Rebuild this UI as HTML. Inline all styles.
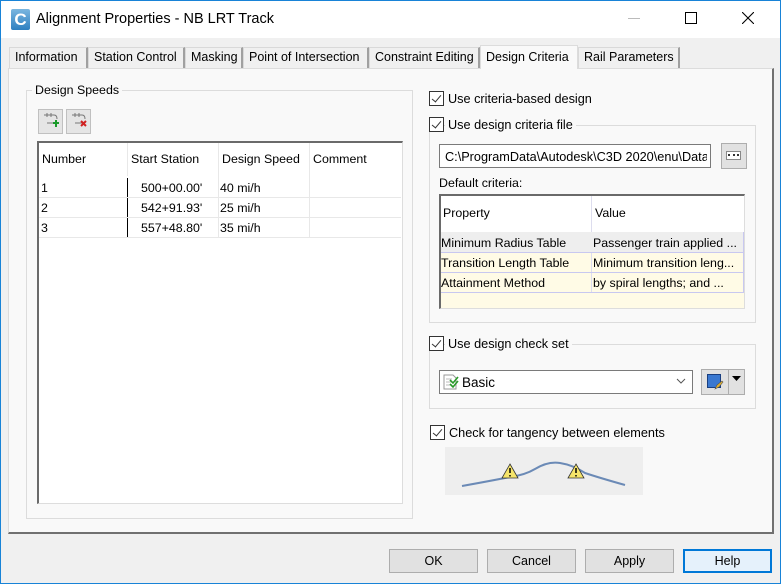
<!DOCTYPE html>
<html><head><meta charset="utf-8">
<style>
*{box-sizing:border-box;margin:0;padding:0}
body{width:781px;height:584px;overflow:hidden;font-family:"Liberation Sans",sans-serif;font-size:12.4px;color:#000;background:#f0f0f0;position:relative}
.abs{position:absolute}
.win{position:absolute;left:0;top:0;width:781px;height:584px;border:1px solid #1883d7;background:#f0f0f0}
.title{position:absolute;left:1px;top:1px;width:779px;height:37px;background:#fff}
.tab{position:absolute;top:47px;height:21px;border:1px solid #d9d9d9;border-bottom:none;background:#f0f0f0;padding:2px 5px;white-space:nowrap;font-size:12.5px}
.tab.sep{border-right:2px solid #a0a0a0}
.panel{position:absolute;left:8px;top:68px;width:766px;height:466px;background:#f9f9f9;border:1px solid #dcdcdc;border-bottom:2px solid #707070;border-right:2px solid #707070}
.grp{position:absolute;border:1px solid #dcdcdc}
.lg{position:absolute;background:#f9f9f9;padding:0 3px;white-space:nowrap}
.cb{position:absolute;width:15px;height:15px;border:1px solid #333;background:#fff}
.cb:after{content:"";position:absolute;left:4px;top:1px;width:4px;height:8px;border:solid #333;border-width:0 1.3px 1.3px 0;transform:rotate(40deg)}
.btn{position:absolute;top:549px;height:24px;background:#e1e1e1;border:1px solid #adadad;text-align:center;line-height:22px;font-size:12.5px}
</style></head><body>
<div class="win"></div>
<div class="title"></div>
<div class="abs" style="left:11px;top:9px;width:19px;height:21px;background:linear-gradient(#7ab6e0,#2d7fc0);border-radius:2px;color:#fff;font-weight:bold;font-size:17px;line-height:21px;text-align:center">C</div>
<div class="abs" style="left:36px;top:11px;font-size:14.5px">Alignment Properties - NB LRT Track</div>
<div class="abs" style="left:628px;top:18px;width:12px;height:1px;background:#bbb"></div>
<div class="abs" style="left:685px;top:12px;width:12px;height:12px;border:1px solid #000"></div>
<svg class="abs" style="left:742px;top:12px" width="12" height="12"><path d="M0 0L12 12M12 0L0 12" stroke="#000" stroke-width="1.1"/></svg>

<div class="tab sep" style="left:9px;width:79px">Information</div>
<div class="tab sep" style="left:88px;width:97px">Station Control</div>
<div class="tab sep" style="left:185px;width:58px">Masking</div>
<div class="tab sep" style="left:243px;width:126px">Point of Intersection</div>
<div class="tab sep" style="left:369px;width:111px">Constraint Editing</div>
<div class="tab" style="left:480px;top:45px;height:24px;width:98px;background:#f9f9f9;border-color:#dcdcdc;padding-top:4px;z-index:2">Design Criteria</div>
<div class="tab sep" style="left:578px;width:102px">Rail Parameters</div>

<div class="panel"></div>
<div class="grp" style="left:26px;top:90px;width:387px;height:429px"></div>
<div class="lg" style="left:32px;top:83px">Design Speeds</div>
<div class="abs" style="left:38px;top:109px;width:25px;height:25px;background:#e5e5e5;border:1px solid #c0c0c0"></div>
<div class="abs" style="left:66px;top:109px;width:25px;height:25px;background:#e5e5e5;border:1px solid #c0c0c0"></div>
<svg class="abs" style="left:38px;top:109px" width="56" height="26"><path d="M6 6h10M9 4v4M13 4v4M16 6q3 0 3 4M9 14h8" stroke="#777" fill="none"/><path d="M15 14h6M18 11v7" stroke="#1a9a2a" stroke-width="2"/><path d="M34 6h10M37 4v4M41 4v4M44 6q3 0 3 4M37 14h8" stroke="#777" fill="none"/><path d="M43 12l5 5M48 12l-5 5" stroke="#d02020" stroke-width="2"/></svg>
<div class="abs" style="left:37px;top:141px;width:366px;height:363px;background:#fff;border-top:2px solid #6a6a6a;border-left:2px solid #6a6a6a;border-right:1px solid #ddd;border-bottom:1px solid #ddd"></div>
<div class="abs" style="left:127px;top:143px;width:1px;height:33px;background:#e8e8e8"></div>
<div class="abs" style="left:218px;top:143px;width:1px;height:94px;background:#e8e8e8"></div>
<div class="abs" style="left:309px;top:143px;width:1px;height:94px;background:#e8e8e8"></div>
<div class="abs" style="left:42px;top:152px">Number</div>
<div class="abs" style="left:131px;top:152px">Start Station</div>
<div class="abs" style="left:222px;top:152px">Design Speed</div>
<div class="abs" style="left:313px;top:152px">Comment</div>
<div class="abs" style="left:127px;top:178px;width:1px;height:60px;background:#000"></div>
<div class="abs" style="left:39px;top:197px;width:362px;height:1px;background:#e8e8e8"></div>
<div class="abs" style="left:39px;top:217px;width:362px;height:1px;background:#e8e8e8"></div>
<div class="abs" style="left:39px;top:237px;width:362px;height:1px;background:#e8e8e8"></div>
<div class="abs" style="left:41px;top:181px">1</div><div class="abs" style="left:141px;top:181px">500+00.00'</div><div class="abs" style="left:220px;top:181px">40 mi/h</div>
<div class="abs" style="left:41px;top:201px">2</div><div class="abs" style="left:141px;top:201px">542+91.93'</div><div class="abs" style="left:220px;top:201px">25 mi/h</div>
<div class="abs" style="left:41px;top:221px">3</div><div class="abs" style="left:141px;top:221px">557+48.80'</div><div class="abs" style="left:220px;top:221px">35 mi/h</div>

<div class="cb" style="left:429px;top:91px"></div>
<div class="abs" style="left:448px;top:92px;font-size:12.7px">Use criteria-based design</div>
<div class="grp" style="left:429px;top:125px;width:327px;height:198px"></div>
<div class="cb" style="left:429px;top:117px"></div>
<div class="lg" style="left:445px;top:118px;font-size:12.7px">Use design criteria file</div>
<div class="abs" style="left:439px;top:144px;width:272px;height:24px;background:#fff;border:1px solid #7a7a7a;padding:5px 5px;white-space:nowrap;overflow:hidden"><span style="display:inline-block;width:262px;overflow:hidden;white-space:nowrap;font-size:12.7px">C:\ProgramData\Autodesk\C3D 2020\enu\Data</span></div>
<div class="abs" style="left:721px;top:143px;width:26px;height:26px;background:#e1e1e1;border:1px solid #adadad"></div>
<div class="abs" style="left:726px;top:151px;width:15px;height:9px;border:1px solid #888;background:#fff"></div>
<div class="abs" style="left:728px;top:154px;width:11px;height:2px;border-top:2px dotted #333"></div>
<div class="abs" style="left:439px;top:176px">Default criteria:</div>
<div class="abs" style="left:439px;top:194px;width:306px;height:115px;background:#fffbe6;border-top:2px solid #6a6a6a;border-left:2px solid #6a6a6a;border-right:1px solid #ddd;border-bottom:1px solid #ddd"></div>
<div class="abs" style="left:441px;top:196px;width:303px;height:36px;background:#fff"></div>
<div class="abs" style="left:591px;top:196px;width:1px;height:96px;background:#dde"></div>
<div class="abs" style="left:441px;top:232px;width:303px;height:20px;background:#eeeeee"></div>
<div class="abs" style="left:441px;top:252px;width:303px;height:1px;background:#c8c8f0"></div>
<div class="abs" style="left:441px;top:272px;width:303px;height:1px;background:#c8c8f0"></div>
<div class="abs" style="left:441px;top:292px;width:303px;height:1px;background:#c8c8f0"></div>
<div class="abs" style="left:743px;top:232px;width:1px;height:60px;background:#c8c8f0"></div>
<div class="abs" style="left:443px;top:206px">Property</div><div class="abs" style="left:595px;top:206px">Value</div>
<div class="abs" style="left:441px;top:236px">Minimum Radius Table</div><div class="abs" style="left:593px;top:236px">Passenger train applied ...</div>
<div class="abs" style="left:441px;top:256px">Transition Length Table</div><div class="abs" style="left:593px;top:256px">Minimum transition leng...</div>
<div class="abs" style="left:441px;top:276px">Attainment Method</div><div class="abs" style="left:593px;top:276px">by spiral lengths; and ...</div>

<div class="grp" style="left:429px;top:344px;width:327px;height:65px"></div>
<div class="cb" style="left:429px;top:336px"></div>
<div class="lg" style="left:445px;top:337px;font-size:12.7px">Use design check set</div>
<div class="abs" style="left:439px;top:370px;width:254px;height:24px;background:#fff;border:1px solid #7a7a7a"></div>
<svg class="abs" style="left:442px;top:373px" width="18" height="18"><path d="M2 2h9l3 3v11H2z" fill="#fff" stroke="#999"/><path d="M4 6h6M4 9h6M4 12h6" stroke="#bbb"/><path d="M8 11l3 3 5-6M8 7l3 3 5-6" stroke="#2a9a2a" stroke-width="1.6" fill="none"/></svg>
<div class="abs" style="left:462px;top:375px;font-size:13.5px">Basic</div>
<svg class="abs" style="left:676px;top:378px" width="10" height="7"><path d="M1 1l4 4 4-4" stroke="#555" fill="none"/></svg>
<div class="abs" style="left:701px;top:369px;width:44px;height:26px;background:#e1e1e1;border:1px solid #adadad"></div>
<div class="abs" style="left:728px;top:370px;width:1px;height:24px;background:#adadad"></div>
<div class="abs" style="left:707px;top:374px;width:14px;height:14px;background:#3a78d0;border:1px solid #1a3f80"></div>
<svg class="abs" style="left:714px;top:380px" width="10" height="10"><path d="M1 9l2-4 5-4 1 1-4 5z" fill="#e0b030" stroke="#555" stroke-width=".6"/></svg>
<svg class="abs" style="left:732px;top:376px" width="9" height="6"><path d="M0 0h9l-4.5 5z" fill="#000"/></svg>

<div class="cb" style="left:430px;top:425px"></div>
<div class="abs" style="left:449px;top:426px;font-size:12.7px">Check for tangency between elements</div>
<div class="abs" style="left:445px;top:447px;width:198px;height:48px;background:#eeeeee"></div>
<svg class="abs" style="left:445px;top:447px" width="198" height="48"><path d="M17 39Q45 34 65 30Q80 28 90 22Q103 14 115 16Q128 18 140 26Q155 31 180 38" stroke="#6b8ab6" stroke-width="2" fill="none"/><path d="M65 17l8 14h-16z" fill="#f5e46a" stroke="#333" stroke-width=".8"/><path d="M65 21v5M65 28v1.5" stroke="#000" stroke-width="1.5"/><path d="M131 17l8 14h-16z" fill="#f5e46a" stroke="#333" stroke-width=".8"/><path d="M131 21v5M131 28v1.5" stroke="#000" stroke-width="1.5"/></svg>

<div class="btn" style="left:389px;width:89px">OK</div>
<div class="btn" style="left:487px;width:89px">Cancel</div>
<div class="btn" style="left:585px;width:89px">Apply</div>
<div class="btn" style="left:683px;width:89px;border:2px solid #0078d7;background:#e5f1fb;line-height:20px">Help</div>
</body></html>
